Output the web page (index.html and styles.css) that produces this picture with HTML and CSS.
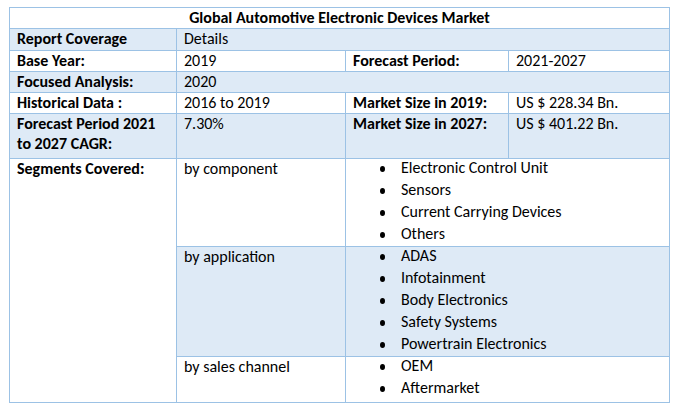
FILE: index.html
```html
<!DOCTYPE html>
<html>
<head>
<meta charset="utf-8">
<link rel="stylesheet" href="styles.css">
</head>
<body>
<table class="market">
  <colgroup>
    <col class="c1"><col class="c2"><col class="c3"><col class="c4">
  </colgroup>
  <tr class="r-title">
    <td colspan="4" class="title">Global Automotive Electronic Devices Market</td>
  </tr>
  <tr class="shade r-a">
    <td class="lbl">Report Coverage</td>
    <td colspan="3">Details</td>
  </tr>
  <tr class="r-b">
    <td class="lbl">Base Year:</td>
    <td>2019</td>
    <td class="lbl">Forecast Period:</td>
    <td>2021-2027</td>
  </tr>
  <tr class="shade r-c">
    <td class="lbl">Focused Analysis:</td>
    <td colspan="3">2020</td>
  </tr>
  <tr class="r-c">
    <td class="lbl">Historical Data :</td>
    <td>2016 to 2019</td>
    <td class="lbl">Market Size in 2019:</td>
    <td>US $ 228.34 Bn.</td>
  </tr>
  <tr class="shade r-f">
    <td class="lbl">Forecast Period 2021 to 2027 CAGR:</td>
    <td>7.30%</td>
    <td class="lbl">Market Size in 2027:</td>
    <td>US $ 401.22 Bn.</td>
  </tr>
  <tr class="seg">
    <td class="lbl" rowspan="3">Segments Covered:</td>
    <td>by component</td>
    <td colspan="2" class="list-cell">
      <ul class="bullets">
        <li>Electronic Control Unit</li>
        <li>Sensors</li>
        <li>Current Carrying Devices</li>
        <li>Others</li>
      </ul>
    </td>
  </tr>
  <tr class="seg shade">
    <td>by application</td>
    <td colspan="2" class="list-cell">
      <ul class="bullets">
        <li>ADAS</li>
        <li>Infotainment</li>
        <li>Body Electronics</li>
        <li>Safety Systems</li>
        <li>Powertrain Electronics</li>
      </ul>
    </td>
  </tr>
  <tr class="seg">
    <td>by sales channel</td>
    <td colspan="2" class="list-cell">
      <ul class="bullets">
        <li>OEM</li>
        <li>Aftermarket</li>
      </ul>
    </td>
  </tr>
</table>
</body>
</html>
```
FILE: styles.css
```css
html, body {
  margin: 0;
  padding: 0;
  background: #ffffff;
}
body {
  padding: 7px 0 0 9px;
  font-family: Carlito, Lato, "Liberation Sans", sans-serif;
  font-size: 16px;
  color: #000000;
}
.market {
  border-collapse: collapse;
  table-layout: fixed;
  width: 660px;
}
.c1 { width: 167px; }
.c2 { width: 169px; }
.c3 { width: 163px; }
.c4 { width: 161px; }
.market td {
  border: 1px solid #9cc2e5;
  padding: 0 7px;
  line-height: 20px;
  vertical-align: top;
  background: #ffffff;
}
.market tr.shade td { background: #deeaf6; }
.market tr.seg td:first-child.lbl { background: #ffffff; }
.lbl { font-weight: 700; }
.title {
  text-align: center;
  font-weight: 700;
}
.r-title td { height: 19px; }
.r-a td { height: 21px; }
.r-b td { height: 20px; }
.r-c td { height: 18px; }
.r-f td { height: 44px; }
.market td.list-cell { padding: 0; line-height: 22px; }
.bullets {
  list-style: none;
  margin: -2px 0 0 0;
  padding: 0 0 1px 55px;
}
.bullets li {
  position: relative;
  line-height: 22px;
}
.bullets li::before {
  content: "";
  position: absolute;
  left: -21px;
  top: 9px;
  width: 5px;
  height: 6px;
  border-radius: 50%;
  background: #000000;
}
.market tr.seg:last-child td { height: 45px; }
```
